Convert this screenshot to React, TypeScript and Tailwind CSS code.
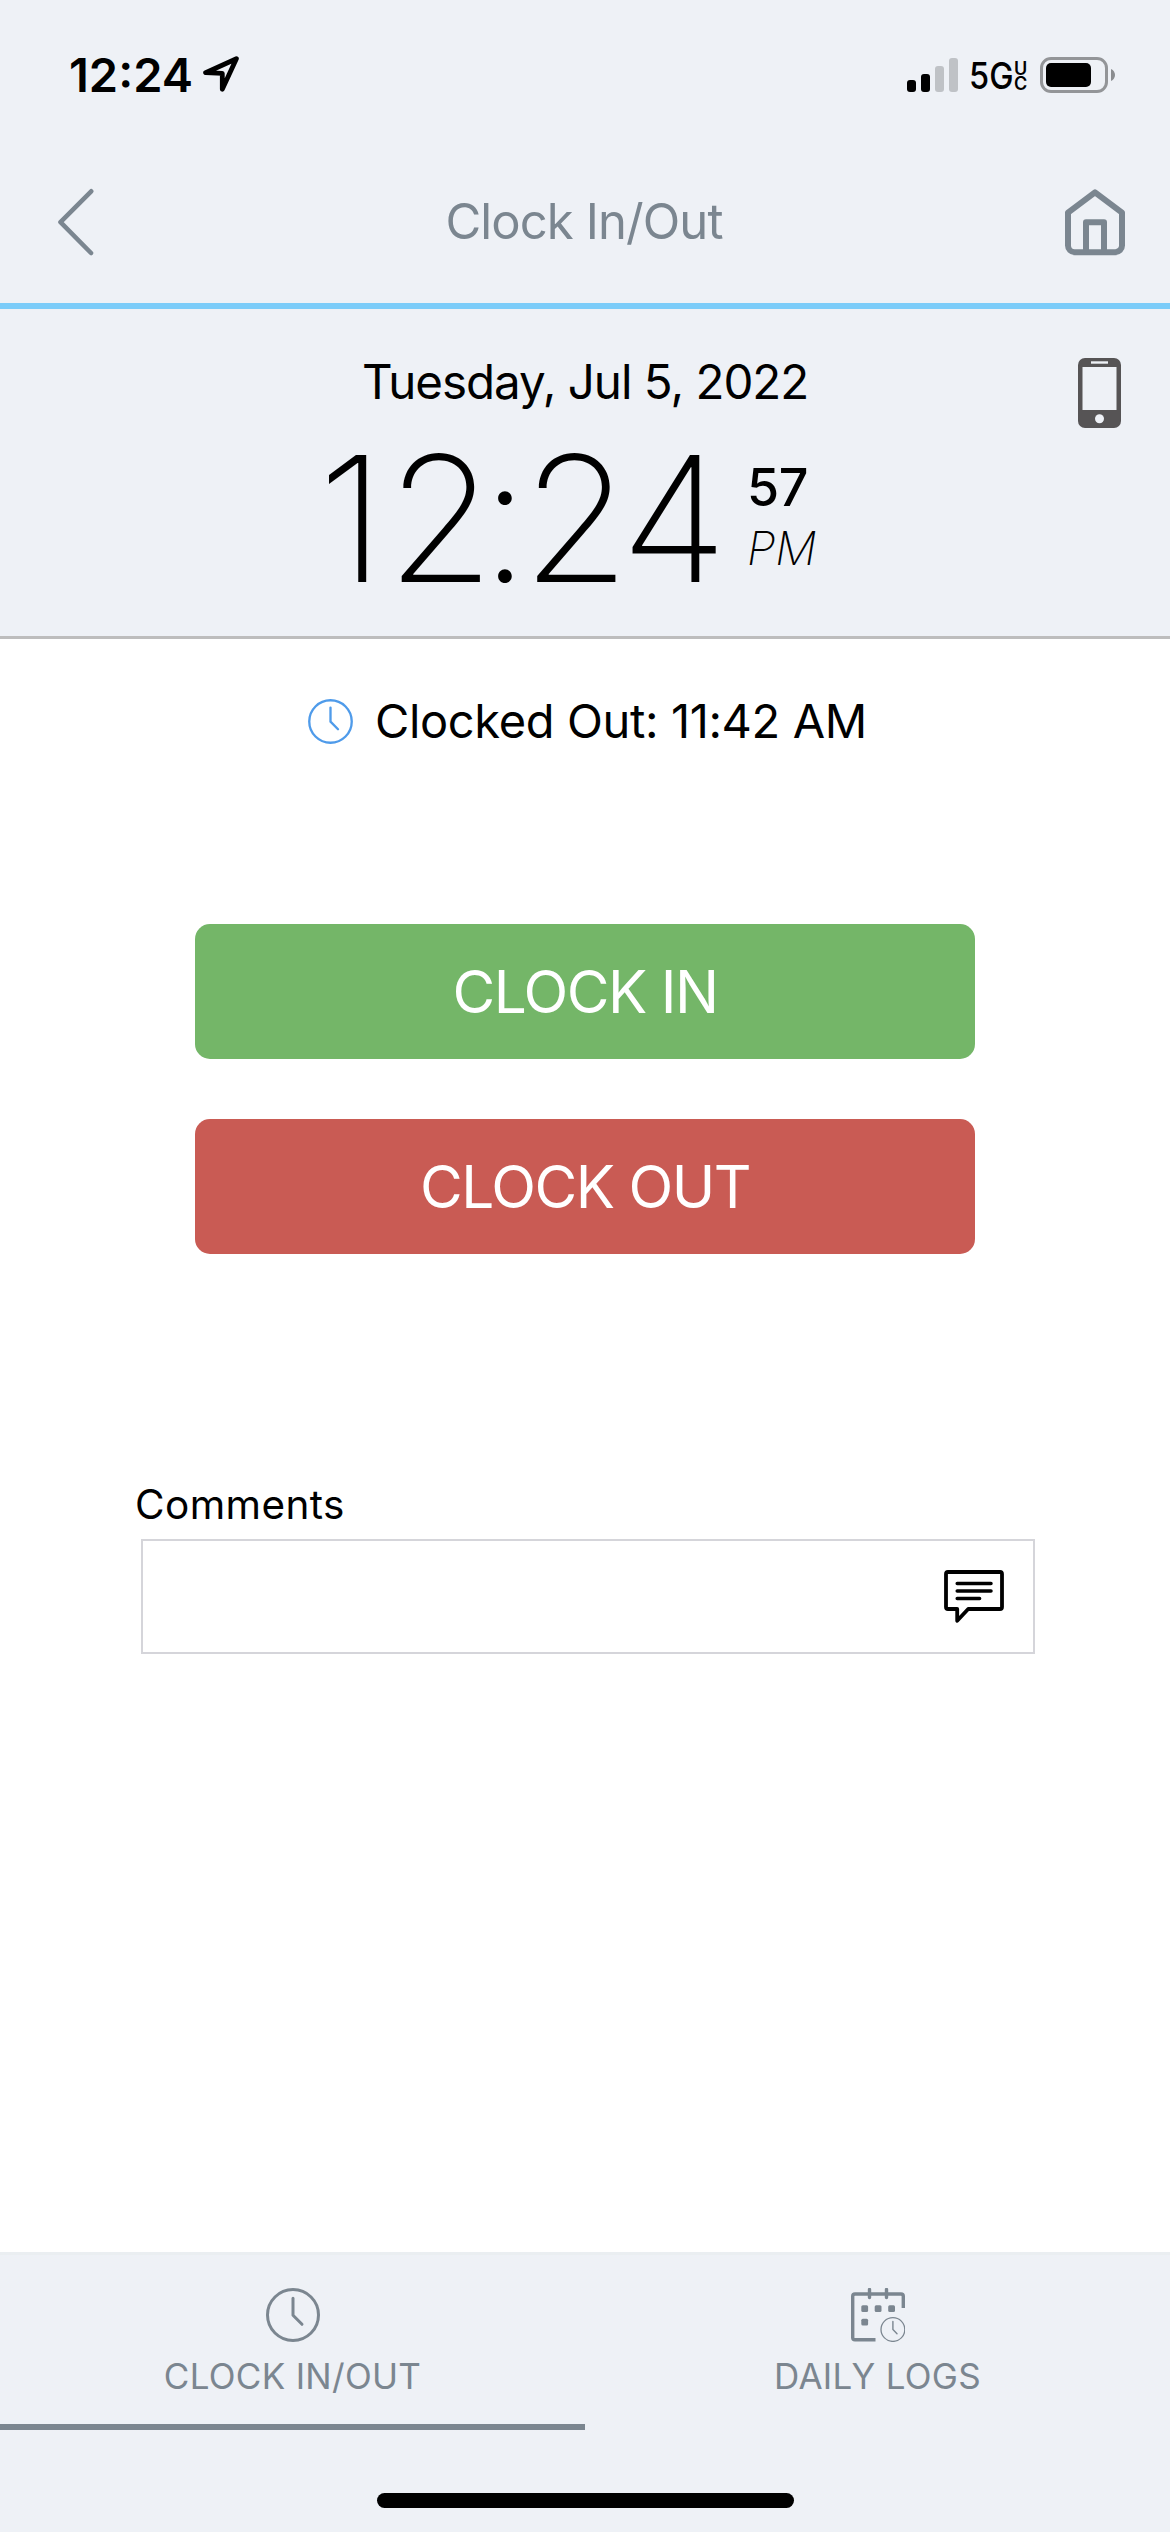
import type { ReactNode } from "react";

function LocationArrow() {
  return (
    <svg viewBox="203 57 37 37" className="h-[37px] w-[37px]" fill="none" stroke="#000" strokeWidth="4.800" strokeLinejoin="round" strokeLinecap="round">
      <path d="M236.400 59.700 205.600 73.700 222.300 74.400 222.300 90.300Z" />
    </svg>
  );
}

function SignalBars() {
  return (
    <div className="flex h-[34px] w-[51px] items-end justify-between">
      <div className="h-3 w-[9px] rounded-[3px] bg-black" />
      <div className="h-[18px] w-[9px] rounded-[3px] bg-black" />
      <div className="h-[26px] w-[9px] rounded-[3px] bg-[#bfc2c6]" />
      <div className="h-[34px] w-[9px] rounded-[3px] bg-[#bfc2c6]" />
    </div>
  );
}

function Battery() {
  return (
    <svg viewBox="1040 56 75 36" className="h-9 w-[75px]">
      <rect x="1041.5" y="57.5" width="65" height="33" rx="9.5" fill="none" stroke="#939598" strokeWidth="3" />
      <rect x="1046" y="62" width="45" height="24" rx="5" fill="#000" />
      <path d="M1111 68v12c2.600-1.200 4-3.400 4-6s-1.400-4.800-4-6Z" fill="#8b8d90" />
    </svg>
  );
}

function ChevronLeft() {
  return (
    <svg viewBox="56 186 40 70" className="h-[70px] w-10" fill="none" stroke="#7b8690" strokeWidth="4.600" strokeLinecap="round" strokeLinejoin="round">
      <path d="M91.200 190.300 60.500 221.200 91 252" />
    </svg>
  );
}

function HomeIcon() {
  return (
    <svg viewBox="1065 187 60 68" className="h-[68px] w-[60px]" fill="none" stroke="#7b8690" strokeWidth="6" strokeLinejoin="round">
      <path d="M1095 191.300 1068 211.600V244.500a6.700 6.700 0 0 0 6.700 6.700H1115.300a6.700 6.700 0 0 0 6.700-6.700V211.600Z" />
      <path d="M1086 251V221.200H1104V251" />
    </svg>
  );
}

function PhoneIcon() {
  return (
    <svg viewBox="0 0 43 70" className="h-[70px] w-[43px]">
      <rect width="43" height="70" rx="7" fill="#565455" />
      <rect x="4.500" y="9" width="34" height="43" fill="#eef1f6" />
      <rect x="13" y="3.300" width="17" height="2.400" fill="#eef1f6" />
      <circle cx="21.500" cy="60.800" r="4.500" fill="#eef1f6" />
    </svg>
  );
}

function ClockIcon({ className, strokeWidth }: { className: string; strokeWidth: number }) {
  return (
    <svg viewBox="0 0 54 54" className={className} fill="none" stroke="currentColor" strokeWidth={strokeWidth} strokeLinecap="round" strokeLinejoin="round">
      <circle cx="27" cy="27" r="25.500" />
      <path d="M27 10.300V27.200L36 36.300" />
    </svg>
  );
}

function CalendarClockIcon() {
  return (
    <svg viewBox="850 2288 54 54" className="h-[54px] w-[54px] text-[#7b8690]" fill="none" stroke="currentColor" strokeWidth="3.400">
      <path d="M874.500 2339.700H854a2.300 2.300 0 0 1-2.300-2.300V2296.300a2.300 2.300 0 0 1 2.300-2.300H900a2.300 2.300 0 0 1 2.300 2.300V2308" />
      <path d="M868.500 2289.500V2297.500M885.500 2289.500V2297.500" strokeLinecap="round" />
      <g fill="currentColor" stroke="none">
        <rect x="860.300" y="2305.200" width="6.800" height="6.800" rx="1.500" />
        <rect x="873.700" y="2305.200" width="6.800" height="6.800" rx="1.500" />
        <rect x="887.200" y="2305.200" width="6.800" height="6.800" rx="1.500" />
        <rect x="860.300" y="2318.700" width="6.800" height="6.800" rx="1.500" />
      </g>
      <circle cx="891.900" cy="2329.500" r="11.900" strokeWidth="1.300" />
      <path d="M891.900 2321.500V2329.500L896 2333.700" strokeWidth="1.400" strokeLinecap="round" />
    </svg>
  );
}

function CommentIcon() {
  return (
    <svg viewBox="944 1571 60 53" className="h-[53px] w-[60px]" fill="none" stroke="#000" strokeWidth="3.800" strokeLinejoin="round" strokeLinecap="round">
      <path d="M948 1573H1000a2 2 0 0 1 2 2V1608a2 2 0 0 1-2 2H968.200L957.200 1621.800V1610H948a2 2 0 0 1-2-2V1575a2 2 0 0 1 2-2Z" />
      <path d="M957.200 1584.400H991M957.200 1591.900H991M957.200 1599.500H979.600" strokeWidth="3.500" />
    </svg>
  );
}

function StatusBar() {
  return (
    <div className="flex h-[141px] items-center justify-between pt-2 pl-[69px] pr-[55px]">
      <div className="flex items-center">
        <span className="w-[134px] text-[47px] leading-[56px] font-semibold">12:24</span>
        <LocationArrow />
      </div>
      <div className="flex items-center">
        <SignalBars />
        <div className="ml-[11px] flex h-[60px] w-[59px] items-center">
          <span className="w-[45px] origin-left scale-x-[0.88] pt-[3px] text-[37px] leading-[56px] font-medium">5G</span>
          <span className="flex flex-col pt-[3px] text-[18px] leading-[15px] font-semibold">
            <span>U</span>
            <span>C</span>
          </span>
        </div>
        <div className="ml-[12px]">
          <Battery />
        </div>
      </div>
    </div>
  );
}

function Tab({ icon, label, active }: { icon: ReactNode; label: string; active?: boolean }) {
  return (
    <button className="flex w-1/2 flex-col items-center pt-[33px] text-[#7b8690]">
      {icon}
      <span className="mt-[13px] text-[35px] leading-[42px] tracking-[0.3px]">{label}</span>
      <span className={active ? "mt-[27px] h-[6px] w-full bg-[#7b8690]" : "mt-[27px] h-[6px] w-full"} />
    </button>
  );
}

export default function App() {
  return (
    <div className="flex h-[2532px] w-[1170px] flex-col overflow-hidden bg-white font-['Inter',sans-serif] text-black">
      <header className="border-b-[6px] border-[#7bccf9] bg-[#eef1f6]">
        <StatusBar />
        <nav className="flex h-[162px] items-center justify-between pr-[45px] pl-[56px]">
          <button className="w-[47px]">
            <ChevronLeft />
          </button>
          <h1 className="text-[49px] leading-[58px] tracking-[-0.900px] text-[#7b8690]">Clock In/Out</h1>
          <button>
            <HomeIcon />
          </button>
        </nav>
      </header>

      <section className="flex h-[330px] border-b-[3px] border-[#bdbdbd] bg-[#eef1f6]">
        <div className="flex w-[1078px] flex-col pt-[44px]">
          <p className="pl-[362px] text-[47.500px] leading-[58px] tracking-[-1px]">Tuesday, Jul 5, 2022</p>
          <div className="mt-[34px] flex h-[146px] items-center pl-[318px]">
            <span className="w-[429px] text-[175px] leading-[146px] font-extralight whitespace-nowrap">
              <span className="tracking-[2px]">1</span>
              <span className="tracking-[-13.800px]">2</span>
              <span className="tracking-[-7.300px]">:</span>
              <span className="tracking-[-9.300px]">2</span>
              <span>4</span>
            </span>
            <div className="flex flex-col">
              <span className="text-[52px] leading-[61px] font-[550] tracking-[-0.500px]">57</span>
              <span className="text-[46px] leading-[61px] font-[150] italic">PM</span>
            </div>
          </div>
        </div>
        <div className="pt-[49px]">
          <PhoneIcon />
        </div>
      </section>

      <main className="flex flex-1 flex-col">
        <div className="mt-[53px] flex h-[58px] items-center gap-[22px] pl-[308px]">
          <ClockIcon className="h-[45px] w-[45px] text-[#4f9bea]" strokeWidth={2.8} />
          <span className="text-[47px] leading-[58px] tracking-[-0.370px]">Clocked Out: 11:42 AM</span>
        </div>

        <div className="mx-[195px] mt-[174px] flex flex-col gap-[60px]">
          <button className="h-[135px] rounded-[15px] bg-[#74b668] text-[58.500px] tracking-[-1.500px] text-white">CLOCK IN</button>
          <button className="h-[135px] rounded-[15px] bg-[#c95b54] text-[58.500px] tracking-[-1.500px] text-white">CLOCK OUT</button>
        </div>

        <div className="mt-[226px] pr-[135px] pl-[135px]">
          <label className="block text-[40.500px] leading-[49px] tracking-[0.400px]">Comments</label>
          <div className="mt-[10px] ml-[6px] flex h-[115px] items-center justify-end border-2 border-[#d5d5da] pr-[29px]">
            <CommentIcon />
          </div>
        </div>
      </main>

      <footer className="h-[280px] border-t-[3px] border-[#eaeef1] bg-[#eef1f6]">
        <div className="flex">
          <Tab active label="CLOCK IN/OUT" icon={<ClockIcon className="h-[54px] w-[54px]" strokeWidth={3} />} />
          <Tab label="DAILY LOGS" icon={<CalendarClockIcon />} />
        </div>
        <div className="mx-auto mt-[63px] h-[15px] w-[417px] rounded-full bg-black" />
      </footer>
    </div>
  );
}
